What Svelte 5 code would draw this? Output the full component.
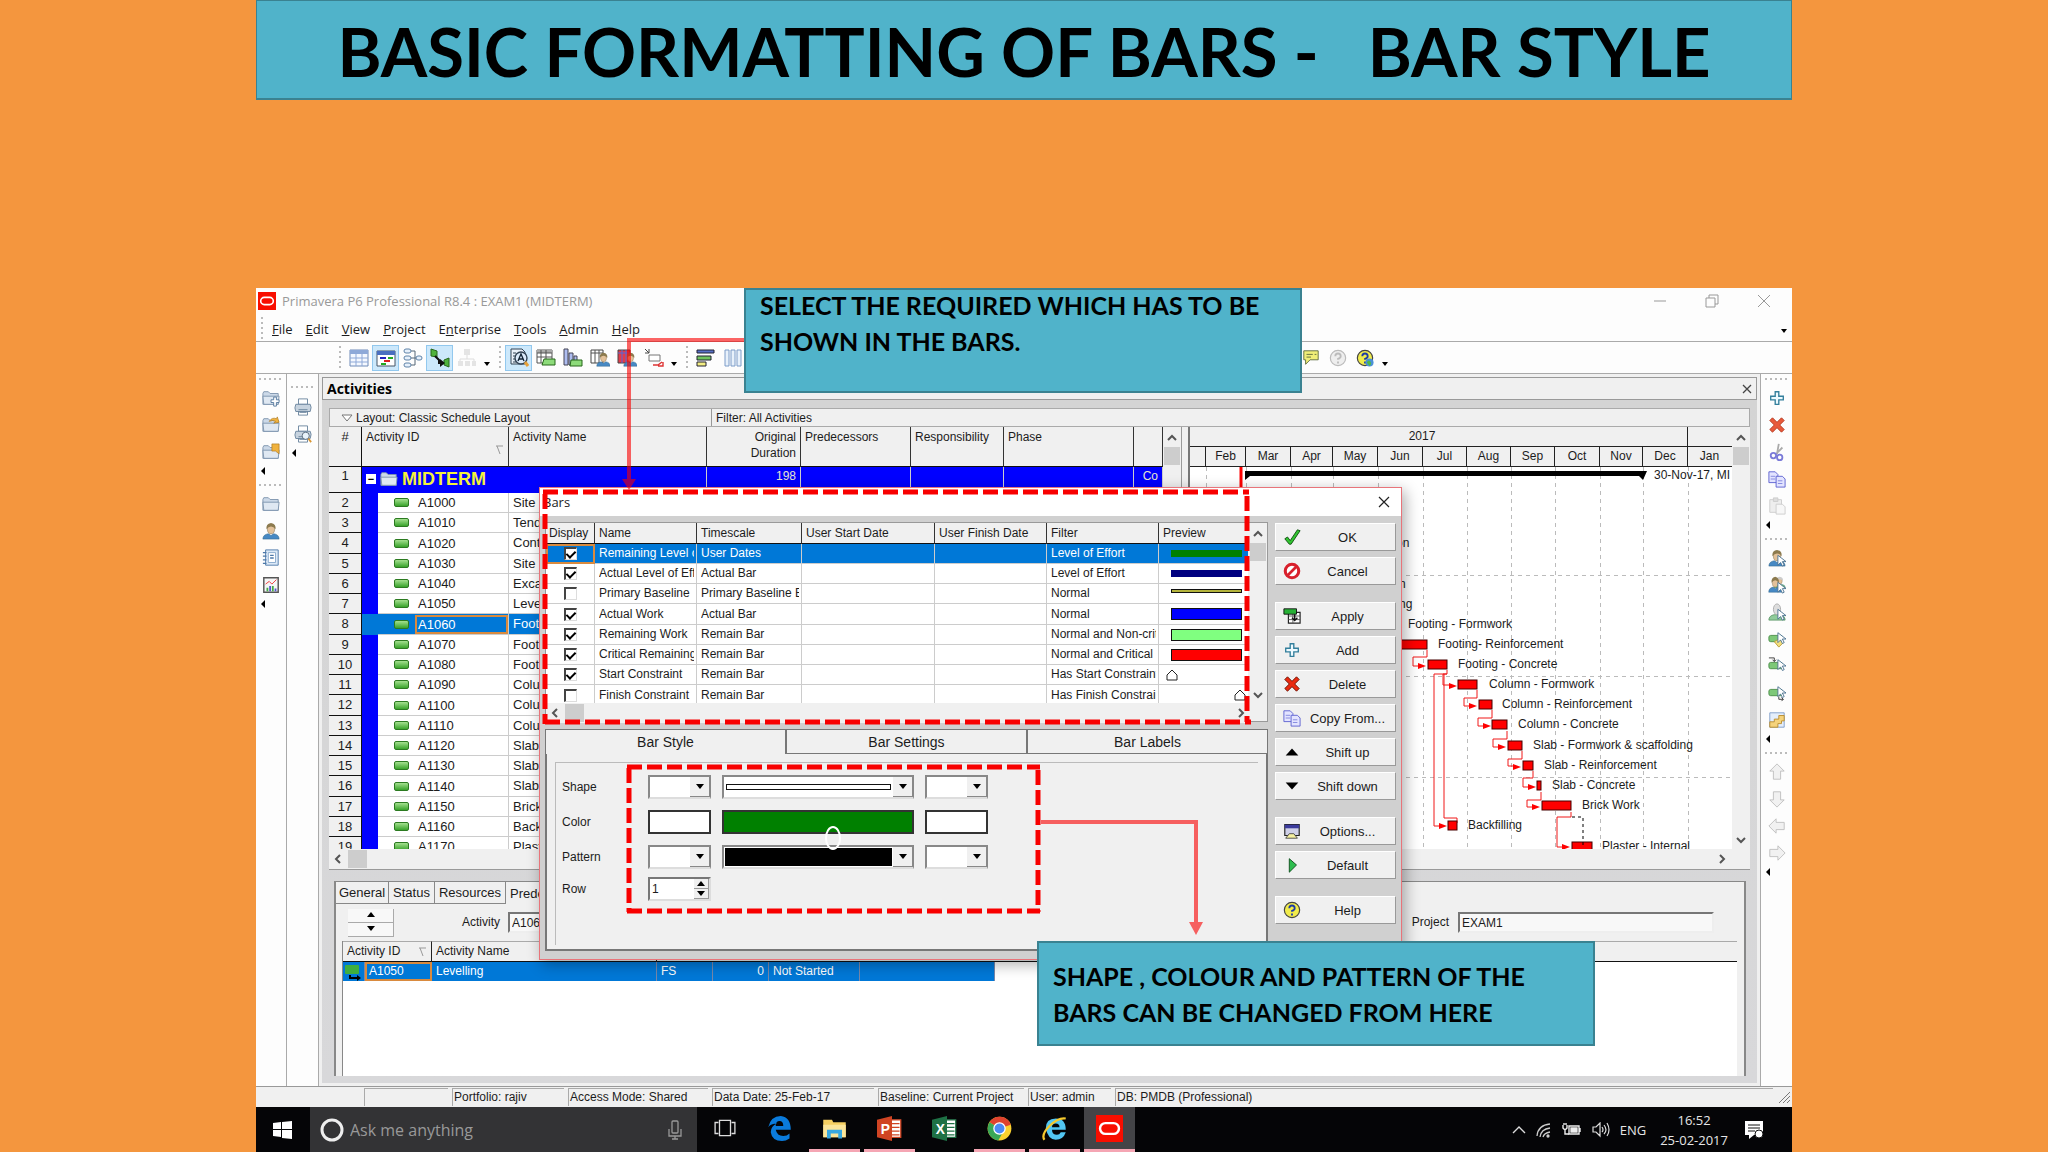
<script>
    const menus = [
        ['F', 'ile'], ['E', 'dit'], ['V', 'iew'], ['P', 'roject'],
        ['E', 'nterprise', 1], ['T', 'ools'], ['A', 'dmin'], ['H', 'elp']
    ];
    const leftTools = ['dots', 'folderAdd', 'folderOpen', 'folderWin', 'tri', 'dots', 'folder', 'person', 'notebook', 'report', 'tri'];
    const rightTools = [
        'dots', 'plus', 'cross', 'cut', 'copy', 'paste', 'tri', 'dots', 'assign', 'assignTwo', 'assignRole',
        'actCode', 'pred', 'succ', 'steps', 'tri', 'dots', 'up', 'down', 'left', 'right', 'tri'
    ];
    const activities = [
        ['A1000', 'Site '], ['A1010', 'Tendering'], ['A1020', 'Contract'], ['A1030', 'Site '], ['A1040', 'Excavation'],
        ['A1050', 'Levelling'], ['A1060', 'Footing - Formwork'], ['A1070', 'Footing- Reinforcement'],
        ['A1080', 'Footing - Concrete'], ['A1090', 'Column - Formwork'], ['A1100', 'Column - Reinforcement'],
        ['A1110', 'Column - Concrete'], ['A1120', 'Slab - Formwork'], ['A1130', 'Slab - Reinforcement'],
        ['A1140', 'Slab - Concrete'], ['A1150', 'Brick Work'], ['A1160', 'Backfilling'], ['A1170', 'Plaster - Internal']
    ];
    const months = [
        ['', 16], ['Feb', 40], ['Mar', 45], ['Apr', 42], ['May', 45], ['Jun', 45], ['Jul', 44],
        ['Aug', 44], ['Sep', 44], ['Oct', 45], ['Nov', 43], ['Dec', 45], ['Jan', 43]
    ];
    const gridX = [16, 56, 101, 143, 188, 233, 277, 321, 365, 410, 453, 498];
    // x, width, label x, label, middle y
    const bars = [
        [180, 57, 248, 'Footing- Reinforcement', 178],
        [238, 19, 268, 'Footing - Concrete', 198],
        [268, 19, 299, 'Column - Formwork', 218],
        [289, 13, 312, 'Column - Reinforcement', 238],
        [302, 15, 328, 'Column - Concrete', 258],
        [318, 14, 343, 'Slab - Formwork & scaffolding', 279],
        [333, 10, 354, 'Slab - Reinforcement', 299],
        [347, 4, 362, 'Slab - Concrete', 319],
        [352, 29, 392, 'Brick Work', 339],
        [258, 9, 278, 'Backfilling', 359],
        [382, 20, 412, 'Plaster - Internal', 380]
    ];
    const links = [
        'M237 183v7h-14v9h7', 'M257 203v4h-4v11h8', 'M287 223v8h-13v8h7', 'M302 243v8h-14v8h7', 'M317 264v8h-14v8h7',
        'M332 284v8h-14v7h7', 'M343 304v7h-10v9h7', 'M351 325v8h-14v7h7', 'M257 207h-13v152h7', 'M254 207v144h13v5', 'M381 345v5h-14v30h7'
    ];
    const heads = [[230, 199], [261, 219], [281, 239], [295, 259], [310, 280], [325, 300], [340, 320], [344, 340], [251, 359], [374, 380]];
    let styles = $state([
        { on: true, name: 'Remaining Level of Effort', scale: 'User Dates', filter: 'Level of Effort', kind: 'green' },
        { on: true, name: 'Actual Level of Effort', scale: 'Actual Bar', filter: 'Level of Effort', kind: 'navy' },
        { on: false, name: 'Primary Baseline', scale: 'Primary Baseline Bar', filter: 'Normal', kind: 'olive' },
        { on: true, name: 'Actual Work', scale: 'Actual Bar', filter: 'Normal', kind: 'blue' },
        { on: true, name: 'Remaining Work', scale: 'Remain Bar', filter: 'Normal and Non-critical', kind: 'lime' },
        { on: true, name: 'Critical Remaining Work', scale: 'Remain Bar', filter: 'Normal and Critical', kind: 'red' },
        { on: true, name: 'Start Constraint', scale: 'Remain Bar', filter: 'Has Start Constraint', kind: 'start' },
        { on: false, name: 'Finish Constraint', scale: 'Remain Bar', filter: 'Has Finish Constraint', kind: 'finish' }
    ]);
    const actions = [
        [['ok', 'OK'], ['cancel', 'Cancel']],
        [['apply', 'Apply'], ['plus', 'Add'], ['delete', 'Delete'], ['copy', 'Copy From...'], ['shiftUp', 'Shift up'], ['shiftDown', 'Shift down']],
        [['options', 'Options...'], ['play', 'Default']],
        [['help', 'Help']]
    ];
    const status = [
        ['', 84], ['Portfolio: rajiv', 112], ['Access Mode: Shared', 140], ['Data Date: 25-Feb-17', 162],
        ['Baseline: Current Project', 146], ['User: admin', 83]
    ];
    const apps = ['taskview', 'edge', 'explorer', 'powerpoint', 'excel', 'chrome', 'ie', 'oracle'];
    const running = ['explorer', 'powerpoint', 'chrome', 'ie', 'oracle'];
    let row = $state('1');
</script>

{#snippet pointer()}
    <path d="M11 7v11l3-3 2 4 2-1-2-4h4z" fill="#fff" stroke="#49718f" />
{/snippet}

{#snippet man(hair, body)}
    <path d="M1 19q0-5 6-6l3 2 3-2q6 1 6 6z" fill={body} stroke="#33668a" stroke-width=".6" />
    <ellipse cx="10" cy="8" rx="4" ry="5" fill="#e3c199" stroke="#8a7350" stroke-width=".6" />
    <path d="M5 8q-1-6 5-7q6 1 5 7q-2-3-5-3t-5 3" fill={hair} />
{/snippet}

{#snippet icon(name, size = 20)}
    <svg class="icon" width={size} height={size} viewBox="0 0 20 20" fill="none" aria-hidden="true">
        {#if name === 'oracle'}
            <path fill="#f80e00" d="M0 0h20v20H0z" /><rect x="3" y="6" width="14" height="8" rx="4" stroke="#fff" stroke-width="1.8" />
        {:else if name === 'table'}
            <path d="M1 2h18v16H1z" fill="#f4f8ff" stroke="#6f8bb8" /><path d="M1 2h18v4H1z" fill="#8ea9d8" /><path d="M1 10h18M1 14h18M7 2v16M13 2v16" stroke="#8ea9d8" />
        {:else if name === 'gantt'}
            <path d="M1 3h18v15H1z" fill="#fff" stroke="#456" /><path d="M1 3h18v4H1z" fill="#4a6fc0" /><path d="M4 10h6" stroke="#22b" stroke-width="2" /><path d="M8 13h6" stroke="#d22" stroke-width="2" /><path d="M12 10h5M5 16h5" stroke="#2a2" stroke-width="2" />
        {:else if name === 'network'}
            <path d="M8 3h4v14H8M6 10h8" stroke="#567" /><g fill="#e6f0fb" stroke="#5f83a8"><rect x="1" y="1" width="7" height="4" rx="2" /><rect x="1" y="8" width="7" height="4" rx="2" /><rect x="1" y="15" width="7" height="4" rx="2" /><rect x="13" y="8" width="6" height="4" rx="2" /></g>
        {:else if name === 'trace'}
            <path d="M1 1l6 2v6L1 8zM14 12l5-2v9l-5-2z" fill="#4fb23c" stroke="#27661b" /><path d="M5 8l4 4v3h3" stroke="#111" stroke-width="2" /><path d="M10 11l5 4-5 4z" fill="#111" />
        {:else if name === 'orgchart'}
            <path d="M10 6v5M3 13v-2h14v2" stroke="#ddd" /><path d="M7 1h6v6H7zM1 13h5v5H1zM8 13h5v5H8zM15 13h4v5h-4z" fill="#e4e4e4" />
        {:else if name === 'find'}
            <path d="M2 1h11l3 3v12H2z" fill="#eaf1fa" stroke="#345" /><path d="M4 5h3M4 8h3M4 11h3M4 14h3" stroke="#345" /><circle cx="12" cy="10" r="6" fill="#dcebfb" stroke="#345" stroke-width="1.4" /><path d="M9 13l3-7 3 7M10 11h4" stroke="#123" stroke-width="1.3" /><path d="M16 14l3 4" stroke="#e5a03a" stroke-width="3" />
        {:else if name === 'sheetBar'}
            <path d="M1 2h15v13H1z" fill="#fff" stroke="#555" /><path d="M1 2h15v3H1z" fill="#aaa" /><path d="M1 5h15M5 2v13M1 9h15M10 2v9" stroke="#555" /><path d="M8 11h11v6H6z" fill="#8ddb7a" stroke="#27661b" />
        {:else if name === 'usage'}
            <path d="M1 1h4v16H1zM6 5h4v12H6zM11 8h3v9h-3z" fill="#aebdf0" stroke="#445" /><path d="M8 12h11v6H7z" fill="#8ddb7a" stroke="#27661b" />
        {:else if name === 'sheetMan' || name === 'barMan'}
            <path d="M1 2h12v13H1z" fill={name === 'barMan' ? '#e23c4a' : '#fff'} stroke="#444" /><path d="M5 2v13M9 2v13M1 5h12" stroke={name === 'barMan' ? '#5569d8' : '#555'} />
            <g transform="translate(6 4) scale(.75)">{@render man('#8c7a4e', '#4789c4')}</g>
        {:else if name === 'traceBox'}
            <path d="M5 7h11v6H5z" fill="#fff" stroke="#777" /><path d="M1 1l4 4M5 1v4H1" stroke="#444" /><path d="M9 17h5l4-3M14 18h5v-4" stroke="#d33" stroke-width="1.4" />
        {:else if name === 'barsThree'}
            <path d="M1 2h17v3H1z" fill="#5770c8" stroke="#223" /><path d="M1 8h14v4H1z" fill="#6fc35d" stroke="#223" /><path d="M1 14h9v4H1z" fill="#f4ee83" stroke="#223" />
        {:else if name === 'columns'}
            <path d="M2 2h4v16H2zM8 2h4v16H8zM14 2h4v16h-4z" fill="#e8f1fb" stroke="#7d9cc8" />
        {:else if name === 'talk'}
            <path d="M2 2h16v10h-9l-5 5v-5H2z" fill="#f0ee78" stroke="#5c6a3d" /><path d="M5 6h7M5 9h5M14 6h2" stroke="#5c6a3d" />
        {:else if name === 'helpOff' || name === 'help' || name === 'helpWeb'}
            <circle cx="10" cy="10" r="8.5" fill={name === 'helpOff' ? '#eee' : '#f1ec4c'} stroke={name === 'helpOff' ? '#bbb' : '#444'} stroke-width="1.3" />
            <path d="M7 8q0-3 3-3t3 3q0 2-3 3v1M10 14v2" stroke={name === 'helpOff' ? '#bbb' : '#1d3ba6'} stroke-width="2" />
            {#if name === 'helpWeb'}<circle cx="15" cy="15" r="4.5" fill="#4a90d8" /><path d="M12 15q2-4 4-1t-1 5" fill="#4db848" />{/if}
        {:else if name.startsWith('folder')}
            <path d="M1 5l1-2h5l2 2h9v12H1z" fill="#ccd9e8" stroke="#7c93ad" /><path d="M1 8h18l-1 9H2z" fill="#dfe8f2" stroke="#7c93ad" />
            {#if name === 'folderAdd'}<path d="M13 9h3v3h3v3h-3v4h-3v-4h-3v-3h3z" fill="#fff" stroke="#53779c" />{/if}
            {#if name === 'folderOpen'}<path d="M8 6q3-5 8-3l1-2 2 6-6 1 2-2q-3-2-7 0" fill="#f0b23e" stroke="#a97418" stroke-width=".7" />{/if}
            {#if name === 'folderWin'}<path d="M11 1h8v11l-4-3h-4z" fill="#f0b23e" stroke="#a97418" stroke-width=".7" />{/if}
        {:else if name === 'person'}
            {@render man('#8c7a4e', '#4789c4')}
        {:else if name === 'notebook'}
            <path d="M4 1h14v17H4z" fill="#dce9f7" stroke="#4c78a8" /><path d="M7 4h8v11H7z" fill="#fff" stroke="#86a8cc" /><path d="M9 7h4M9 10h4M1 4h4M1 8h4M1 12h4M1 16h4" stroke="#4c78a8" stroke-width="1.4" />
        {:else if name === 'report'}
            <path d="M2 2h16v16H2z" fill="#f6f6f6" stroke="#555" stroke-width="1.6" /><path d="M4 9l4-3 3 3 5-5" stroke="#e33" /><path d="M6 17v-4M12 17v-6" stroke="#4a4" stroke-width="2" /><path d="M9 17v-6M15 17v-3" stroke="#55c" stroke-width="2" />
        {:else if name.startsWith('print')}
            <path d="M5 1h10v6H5zM5 13h10v6H5z" fill="#fff" stroke="#68829c" /><path d="M2 7h16q2 3 0 8H2Q0 11 2 7z" fill="#c7d3df" stroke="#68829c" /><path d="M5 13h10M6 16h8" stroke="#68829c" />
            {#if name === 'printView'}<circle cx="13" cy="12" r="4" fill="#e9f3fb" stroke="#567" /><path d="M16 15l3 4" stroke="#d99632" stroke-width="2" />{/if}
        {:else if name === 'plus'}
            <path d="M8 3h4v5h5v4h-5v5H8v-5H3V8h5z" fill="#eefaff" stroke="#337f9c" stroke-width="1.5" />
        {:else if name === 'cross' || name === 'delete'}
            <path d="M5 2l5 5 5-5 3 3-5 5 5 5-3 3-5-5-5 5-3-3 5-5-5-5z" fill={name === 'delete' ? '#ea2a10' : '#e9593a'} stroke={name === 'delete' ? '#661000' : '#b23b22'} />
        {:else if name === 'cut'}
            <path d="M12 1l-2 11M16 5l-8 8" stroke="#aaa" stroke-width="2" /><circle cx="6" cy="14" r="3" stroke="#7a7ad8" stroke-width="2" /><circle cx="13" cy="16" r="3" stroke="#7a7ad8" stroke-width="2" />
        {:else if name === 'copy'}
            <path d="M1 2h7l3 3v9H1z" fill="#e3e4ff" stroke="#5a5fd0" /><path d="M9 7h7l3 3v9H9z" fill="#e3e4ff" stroke="#5a5fd0" /><path d="M3 7h5M3 10h5M11 12h5M11 15h5" stroke="#7f83dd" />
        {:else if name === 'paste'}
            <path d="M2 3h13v14H2z" fill="#eee" stroke="#ccc" /><path d="M6 1h5v4H6z" fill="#ddd" stroke="#ccc" /><path d="M9 8h7l3 3v8H9z" fill="#f7f7f7" stroke="#ccc" />
        {:else if name === 'assign'}
            {@render man('#8c7a4e', '#4789c4')}{@render pointer()}
        {:else if name === 'assignTwo'}
            <g transform="translate(6 0) scale(.7)">{@render man('#ccc', '#7bc47b')}</g><g transform="scale(.8 .95)">{@render man('#8c7a4e', '#4789c4')}</g>{@render pointer()}
        {:else if name === 'assignRole'}
            <path d="M1 19q0-5 6-6h6q6 1 6 6z" fill="#8fcb9a" stroke="#5d9a69" /><ellipse cx="10" cy="7" rx="4" ry="6" fill="#ddd" stroke="#aaa" />{@render pointer()}
        {:else if name === 'actCode' || name === 'pred' || name === 'succ'}
            <rect x="1" y="6" width="15" height="7" rx="2" fill="#7dc878" stroke="#4a8d48" />
            {#if name === 'actCode'}<path d="M7 13l5-3 5 4-5 5z" fill="#f4df7e" stroke="#b79a33" />{/if}
            {#if name === 'pred'}<path d="M1 1h6v4M5 3l2 2 2-2" stroke="#333" />{/if}
            {#if name === 'succ'}<path d="M12 14v3h5M15 15l2 2-2 2" stroke="#333" />{/if}
            <g transform="translate(0 -4)">{@render pointer()}</g>
        {:else if name === 'steps'}
            <path d="M2 2h16v16H2z" fill="#e4eefb" stroke="#7d9cc8" /><path d="M2 18v-6h5V9h5V5h6v6h-3v3h-4v4z" fill="#f5d37c" stroke="#b98b2b" />
        {:else if ['up', 'down', 'left', 'right'].includes(name)}
            <path transform="rotate({{ up: 0, right: 90, down: 180, left: 270 }[name]} 10 10)" d="M10 1l8 8h-4v9H6V9H2z" fill="#f1f1f1" stroke="#bdbdbd" />
        {:else if name === 'ok'}
            <path d="M2 12l3-2 3 4 8-12 3 1L9 18H7z" fill="#31c531" stroke="#114d11" />
        {:else if name === 'cancel'}
            <circle cx="10" cy="10" r="7.5" fill="#fff" stroke="#d8202c" stroke-width="3.4" /><path d="M5 15L15 5" stroke="#d8202c" stroke-width="3" />
        {:else if name === 'apply'}
            <path d="M6 6h13v12H6z" fill="#fff" stroke="#222" stroke-width="1.3" /><path d="M6 10h13M6 14h13M11 6v12" stroke="#555" /><path d="M1 2h14v6H1z" fill="#27b236" stroke="#111" /><path d="M13 8v7M10 12l3 3 3-3" stroke="#111" stroke-width="1.5" />
        {:else if name === 'shiftUp'}
            <path d="M10 6l7 8H3z" fill="#000" />
        {:else if name === 'shiftDown'}
            <path d="M10 14l7-8H3z" fill="#000" />
        {:else if name === 'options'}
            <path d="M2 3h16v12H2z" fill="#cfd0e8" stroke="#222" stroke-width="1.3" /><path d="M2 3h16v4H2z" fill="#3b3b9c" /><path d="M3 18l4-5h5l4 5z" fill="#f5f0a0" stroke="#444" />
        {:else if name === 'play'}
            <path d="M7 3l8 7-8 8z" fill="#2dbd4e" stroke="#0c4c1b" />
        {:else if name === 'taskview'}
            <path d="M5 3h10v14H5zM4 5H1v10h3M16 5h3v10h-3" stroke="#ddd" stroke-width="1.2" />
        {:else if name === 'edge'}
            <path d="M1 9Q3 0 11 0q8 1 8 11H7q1 5 6 5 3 0 5-2v4q-3 2-6 2-8 0-9-7 0-5 5-7-5 0-7 3zm6-1h6q0-4-3-4t-3 4z" fill="#0a7bdc" fill-rule="evenodd" />
        {:else if name === 'explorer'}
            <path d="M1 3h7l1 2h10v12H1z" fill="#f5cf62" /><path d="M1 7h18v10H1z" fill="#fbe59a" /><path d="M4 18v-7h12v7h-3v-4H7v4z" fill="#38a8e0" />
        {:else if name === 'powerpoint' || name === 'excel'}
            <path d="M10 3h9v14h-9z" fill="#fff" stroke={name === 'excel' ? '#1e7145' : '#d04423'} /><path d="M12 6h6M12 9h6M12 12h6M12 15h6" stroke={name === 'excel' ? '#1e7145' : '#d04423'} />
            <path d="M0 3l12-3v20L0 17z" fill={name === 'excel' ? '#1e7145' : '#d04423'} />
            <text x="3" y="14" class="logo">{name === 'excel' ? 'X' : 'P'}</text>
        {:else if name === 'chrome'}
            <circle cx="10" cy="10" r="9.5" fill="#fbd22f" /><path d="M10 10L2 5a9.500 9.500 0 0 1 17 2z" fill="#e0432f" /><path d="M10 10L2 5a9.500 9.500 0 0 0 7 14.500l4-7z" fill="#3aa757" /><circle cx="10" cy="10" r="4.500" fill="#4c8bf5" stroke="#fff" />
        {:else if name === 'ie'}
            <path d="M3 10q0-8 8-8t8 9H8q0 4 4 4 2 0 3-2h4q-2 6-8 6t-8-9zm5-1h6q0-3-3-3T8 9z" fill="#52c6f2" fill-rule="evenodd" /><path d="M2 19Q-1 15 6 8T19 2" stroke="#f5c92e" stroke-width="1.8" />
        {/if}
    </svg>
{/snippet}

{#snippet tool(name)}
    {#if name === 'dots'}
        <span class="dots"></span>
    {:else if name === 'tri'}
        <svg class="tri" width="8" height="10" aria-hidden="true"><path d="M6 1v8L2 5z" /></svg>
    {:else}
        <button class="tool" aria-label={name}>{@render icon(name, 18)}</button>
    {/if}
{/snippet}

{#snippet chevron(dir)}
    <svg width="12" height="12" viewBox="0 0 12 12" fill="none" stroke="#555" stroke-width="2" aria-hidden="true">
        <path transform="rotate({{ up: 0, right: 90, down: 180, left: 270 }[dir]} 6 6)" d="M2 8l4-4 4 4" />
    </svg>
{/snippet}

{#snippet combo(label, kind)}
    <div class="combo {kind}">
        <select aria-label={label}><option></option></select>
        <span class="sample"></span>
        <span class="arrow"><svg width="10" height="6"><path d="M1 0h8L5 5z" /></svg></span>
    </div>
{/snippet}

<main class="slide">
    <h1>BASIC FORMATTING OF BARS - &nbsp; BAR STYLE</h1>

    <section class="screen">
        <header class="titlebar">
            {@render icon('oracle', 18)}
            <span class="apptitle">Primavera P6 Professional R8.4 : EXAM1 (MIDTERM)</span>
            <div class="winbtns">
                <button aria-label="Minimize"><svg width="14" height="14"><path d="M1 7h12" /></svg></button>
                <button aria-label="Restore"><svg width="14" height="14"><path d="M1 4h9v9H1zM4 4V1h9v9h-3" /></svg></button>
                <button aria-label="Close"><svg width="14" height="14"><path d="M1 1l12 12M13 1L1 13" /></svg></button>
            </div>
        </header>
        <nav class="menubar">
            <span class="vdots"></span>
            {#each menus as [a, b, n]}
                <a href="#menu">{#if n}E<u>n</u>terprise{:else}<u>{a}</u>{b}{/if}</a>
            {/each}
            <svg class="more" width="8" height="10"><path d="M1 5h6L4 9z" /></svg>
        </nav>
        <div class="toolbar">
            <span class="vdots"></span>
            <button aria-label="Table">{@render icon('table')}</button>
            <button class="on" aria-label="Gantt chart">{@render icon('gantt')}</button>
            <button aria-label="Network">{@render icon('network')}</button>
            <button class="on" aria-label="Trace">{@render icon('trace')}</button>
            <button aria-label="Chart">{@render icon('orgchart')}</button>
            <svg class="drop" width="10" height="6"><path d="M2 1h6L5 5z" /></svg>
            <span class="vdots"></span>
            <button class="on" aria-label="Details">{@render icon('find')}</button>
            <button aria-label="Activity table">{@render icon('sheetBar')}</button>
            <button aria-label="Usage">{@render icon('usage')}</button>
            <button aria-label="Resources">{@render icon('sheetMan')}</button>
            <button aria-label="Profile">{@render icon('barMan')}</button>
            <button aria-label="Logic">{@render icon('traceBox')}</button>
            <svg class="drop" width="10" height="6"><path d="M2 1h6L5 5z" /></svg>
            <span class="vdots"></span>
            <button aria-label="Bars">{@render icon('barsThree')}</button>
            <button aria-label="Columns">{@render icon('columns')}</button>
            <div class="helpers">
                <button aria-label="Comment">{@render icon('talk', 18)}</button>
                <button aria-label="Help">{@render icon('helpOff', 18)}</button>
                <button aria-label="Online help">{@render icon('helpWeb', 18)}</button>
                <svg class="drop" width="10" height="6"><path d="M2 1h6L5 5z" /></svg>
            </div>
        </div>

        <div class="workspace">
            <div class="side first">{#each leftTools as t}{@render tool(t)}{/each}</div>
            <div class="side second">{#each ['dots', 'print', 'printView', 'tri'] as t}{@render tool(t)}{/each}</div>
            <div class="center">
                <div class="heading">
                    <h2>Activities</h2>
                    <button aria-label="Close activities"><svg width="10" height="10"><path d="M1 1l8 8M9 1L1 9" stroke="#444" stroke-width="1.3" /></svg></button>
                </div>
                <div class="panel">
                    <div class="layoutbar">
                        <div class="layoutname">
                            <svg width="12" height="8"><path d="M1 1h10L6 7z" fill="#fff" stroke="#777" /></svg>
                            Layout: Classic Schedule Layout
                        </div>
                        <div>Filter: All Activities</div>
                    </div>
                    <div class="split">
                        <div class="pane sheet">
                            <div class="view">
                                <table class="acts">
                                    <colgroup>
                                        <col class="w33" /><col class="w16" /><col class="w131" /><col class="w198" /><col class="w94" />
                                        <col class="w110" /><col class="w93" /><col class="w130" /><col class="w29" />
                                    </colgroup>
                                    <thead>
                                        <tr>
                                            <th class="mid">#</th><th colspan="2"><span class="sorted">Activity ID<svg width="8" height="10"><path d="M0 1h7M1 1l3 8" fill="none" stroke="#999" /></svg></span></th>
                                            <th>Activity Name</th><th class="num">Original Duration</th>
                                            <th>Predecessors</th><th>Responsibility</th><th>Phase</th><th></th>
                                        </tr>
                                    </thead>
                                    <tbody>
                                        <tr class="wbs">
                                            <td class="mid">1</td>
                                            <td colspan="3"><span class="wbsname"><span class="minus">−</span>{@render icon('folder', 18)}MIDTERM</span></td>
                                            <td class="num">198</td><td></td><td></td><td></td><td class="num">Co</td>
                                        </tr>
                                        {#each activities as [id, name], i}
                                            <tr class:picked={id === 'A1060'}>
                                                <td class="mid">{i + 2}</td>
                                                <td class="stripe"></td>
                                                <td class="idcell"><span class="act"><i class="pill"></i><span class="actid">{id}</span></span></td>
                                                <td class="big">{name}</td><td></td><td></td><td></td><td></td><td></td>
                                            </tr>
                                        {/each}
                                    </tbody>
                                </table>
                                <div class="vscroll">{@render chevron('up')}<span class="vthumb"></span></div>
                            </div>
                            <div class="hscroll">{@render chevron('left')}<span class="hthumb"></span></div>
                        </div>
                        <div class="pane gantt">
                            <div class="view">
                                <div class="chart">
                                    <div class="years"><span class="y17">2017</span><span></span></div>
                                    <div class="months">
                                        {#each months as [m, w]}<span style="width:{w}px">{m}</span>{/each}
                                    </div>
                                    <svg class="plot" width="100%" height="382">
                                        <g class="grid">
                                            {#each gridX as x}<path d="M{x} 0v382" />{/each}
                                            {#each [108, 209, 310] as y}<path d="M0 {y}h2000" />{/each}
                                        </g>
                                        <path d="M51 0v30" stroke="#f00" stroke-width="3" />
                                        <path d="M55 4h402l-4 9-4-4H60l-5 4z" />
                                        <text x="464" y="12">30-Nov-17, MI</text>
                                        <text x="132" y="80">Site Mobilisation</text>
                                        <text x="157" y="121">Excavation</text>
                                        <text x="175" y="141">Levelling</text>
                                        <text x="218" y="161">Footing - Formwork</text>
                                        {#each links as d}<path class="link" {d} />{/each}
                                        {#each heads as [x, y]}<path d="M{x - 2} {y - 3}l8 3-8 3z" fill="#f00" />{/each}
                                        {#each bars as [x, w, lx, label, y]}
                                            <rect class="bar" {x} y={y - 5} width={w} height="9" />
                                            <text x={lx} y={y + 3}>{label}</text>
                                        {/each}
                                        <path d="M382 350h11v30" fill="none" stroke="#000" stroke-dasharray="3 3" />
                                    </svg>
                                </div>
                                <div class="vscroll">{@render chevron('up')}<span class="vthumb"></span><span class="end">{@render chevron('down')}</span></div>
                            </div>
                            <div class="hscroll"><span class="end">{@render chevron('right')}</span></div>
                        </div>
                    </div>
                    <div class="details">
                        <div class="tabs">
                            <button class="w54">General</button><button class="w46">Status</button><button class="w71">Resources</button><button class="open">Predecessors</button>
                        </div>
                        <div class="fields">
                            <div class="updown">
                                <button aria-label="Previous"><svg width="10" height="6"><path d="M5 0l4 5H1z" /></svg></button>
                                <button aria-label="Next"><svg width="10" height="6"><path d="M1 0h8L5 5z" /></svg></button>
                            </div>
                            <label for="activity">Activity</label><input id="activity" class="actinput" value="A1060" />
                            <label for="project" class="proj">Project</label><input id="project" class="projinput" value="EXAM1" />
                        </div>
                        <div class="preds">
                            <table>
                                <colgroup>
                                    <col class="w22" /><col class="w67" /><col class="w225" /><col class="w56" /><col class="w56" /><col class="w91" /><col class="w135" /><col />
                                </colgroup>
                                <thead>
                                    <tr><th colspan="2"><span class="sorted">Activity ID<svg width="8" height="10"><path d="M0 1h7M1 1l3 8" fill="none" stroke="#999" /></svg></span></th><th>Activity Name</th><th colspan="5" class="last"></th></tr>
                                </thead>
                                <tbody>
                                    <tr>
                                        <td class="linkcell"><svg width="20" height="18"><rect x="1" y="2" width="14" height="9" rx="1" fill="#3fae3f" /><path d="M6 12v3h8" fill="none" stroke="#000" stroke-width="2" /><path d="M13 12l4 3-4 3z" /></svg></td>
                                        <td class="focus">A1050</td><td>Levelling</td><td>FS</td><td class="num">0</td><td>Not Started</td><td></td><td class="blank"></td>
                                    </tr>
                                </tbody>
                            </table>
                        </div>
                    </div>
                </div>
            </div>
            <div class="side third">{#each rightTools as t}{@render tool(t)}{/each}</div>
        </div>

        <footer class="statusbar">
            {#each status as [text, w]}<span style="width:{w}px">{text}</span>{/each}
            <span class="db">DB: PMDB (Professional)</span>
            <svg width="14" height="14"><path d="M2 13L13 2M6 13l7-7M10 13l3-3" stroke="#777" /></svg>
        </footer>

        <div class="taskbar">
            <button class="start" aria-label="Start"><svg width="20" height="20"><path d="M0 3l8-1v7H0zM9 2l10-1v8H9zM0 10h8v7l-8-1zM9 10h10v9L9 18z" fill="#fff" /></svg></button>
            <div class="search">
                <svg width="24" height="24"><circle cx="12" cy="12" r="10" fill="none" stroke="#eee" stroke-width="3" /></svg>
                <input placeholder="Ask me anything" aria-label="Ask me anything" />
                <svg width="14" height="20" fill="none" stroke="#999" stroke-width="1.3"><rect x="4" y="1" width="6" height="12" rx="1" /><path d="M1 9v7h12V9M7 16v3M4 19h6" /></svg>
            </div>
            {#each apps as a}
                <button class="app" class:running={running.includes(a)} class:current={a === 'oracle'} aria-label={a}>{@render icon(a, a === 'taskview' ? 22 : a === 'oracle' ? 27 : 25)}</button>
            {/each}
            <div class="tray">
                <svg width="14" height="9"><path d="M1 8l6-6 6 6" fill="none" stroke="#ddd" stroke-width="1.4" /></svg>
                <svg width="16" height="16" fill="none" stroke="#ccc" stroke-width="1.3"><path d="M1 14Q2 3 14 2M4 15Q5 7 14 6M7 15Q8 11 14 10" /><circle cx="12" cy="14" r="1" fill="#fff" /></svg>
                <svg width="20" height="14" fill="none" stroke="#eee" stroke-width="1.4"><path d="M1 2v3q2 3 4 0V2M3 6v5h4M2 0v2M4 0v2" /><path d="M7 3h10v8H7zM18 5v4" /><path d="M9 5h6v4H9z" fill="#eee" /></svg>
                <svg width="18" height="16" fill="none" stroke="#ddd" stroke-width="1.2"><path d="M1 5h3l4-4v13l-4-4H1zM10 5q2 3 0 5M12 3q4 5 0 9M15 1q4 7 0 13" /></svg>
                <span>ENG</span>
                <div class="clock"><span>16:52</span><span>25-02-2017</span></div>
                <svg width="20" height="20"><path d="M1 1h18v14h-9l-5 4v-4H1z" fill="#fff" /><path d="M4 5h12M4 8h12M4 11h7" stroke="#111" /><circle cx="15" cy="14" r="4" fill="#fff" stroke="#111" /></svg>
            </div>
        </div>

        <div class="dialog" role="dialog" aria-label="Bars">
            <div class="dlgtitle">Bars<button aria-label="Close dialog"><svg width="12" height="12"><path d="M1 1l10 10M11 1L1 11" stroke="#222" stroke-width="1.2" /></svg></button></div>
            <div class="dlgbody">
                <div class="dlgmain">
                    <div class="list">
                        <div class="listview">
                            <div class="listclip">
                                <table>
                                    <colgroup><col class="w49" /><col class="w102" /><col class="w105" /><col class="w133" /><col class="w112" /><col class="w112" /><col /></colgroup>
                                    <thead>
                                        <tr><th>Display</th><th>Name</th><th>Timescale</th><th>User Start Date</th><th>User Finish Date</th><th>Filter</th><th class="last">Preview</th></tr>
                                    </thead>
                                    <tbody>
                                        {#each styles as s, i}
                                            <tr class:picked={i === 0}>
                                                <td class="check" class:focus={i === 0}><input type="checkbox" bind:checked={s.on} aria-label={s.name} /></td>
                                                <td><div class="clip">{s.name}</div></td><td><div class="clip">{s.scale}</div></td><td></td><td></td><td><div class="clip">{s.filter}</div></td>
                                                <td class="preview">
                                                    {#if s.kind === 'start' || s.kind === 'finish'}
                                                        <svg class="house {s.kind}" width="12" height="12"><path d="M1 11V6l5-5 5 5v5z" fill="#fff" stroke="#222" /></svg>
                                                    {:else}
                                                        <div class="swatch {s.kind}"></div>
                                                    {/if}
                                                </td>
                                            </tr>
                                        {/each}
                                    </tbody>
                                </table>
                            </div>
                            <div class="hscroll">{@render chevron('left')}<span class="hthumb"></span><span class="end">{@render chevron('right')}</span></div>
                        </div>
                        <div class="vscroll">{@render chevron('up')}<span class="vthumb"></span><span class="end low">{@render chevron('down')}</span></div>
                    </div>
                    <div class="styletabs"><button class="open">Bar Style</button><button>Bar Settings</button><button>Bar Labels</button></div>
                    <div class="tabpage">
                        <div class="form">
                            <span>Shape</span>{@render combo('Start shape', 'small')}{@render combo('Bar shape', 'outline')}{@render combo('End shape', 'small')}
                            <span>Color</span><button class="color" aria-label="Start color"></button><button class="color fill" aria-label="Bar color"></button><button class="color" aria-label="End color"></button>
                            <span>Pattern</span>{@render combo('Start pattern', 'small')}{@render combo('Bar pattern', 'solid')}{@render combo('End pattern', 'small')}
                            <label for="row">Row</label>
                            <div class="spinner">
                                <input id="row" bind:value={row} />
                                <button aria-label="More"><svg width="8" height="5"><path d="M4 0l4 5H0z" /></svg></button>
                                <button aria-label="Less"><svg width="8" height="5"><path d="M0 0h8L4 5z" /></svg></button>
                            </div>
                        </div>
                    </div>
                </div>
                <div class="actions">
                    {#each actions as group}
                        <div class="group">
                            {#each group as [ic, text]}<button>{@render icon(ic, 18)}<span>{text}</span></button>{/each}
                        </div>
                    {/each}
                </div>
            </div>
        </div>

        <svg class="marks" aria-hidden="true">
            <g class="dashed">
                <path d="M287 204h706" /><path d="M289 206v230" /><path d="M289 434h706" /><path d="M991 208v226" />
                <path d="M371 479h413" /><path d="M373 480v144" /><path d="M371 623h413" /><path d="M782 482v142" />
            </g>
            <g class="arrows">
                <path d="M488 52H373v144" /><path d="M785 534h155v106" />
                <path class="head" d="M366 191h14l-7 11z" /><path class="head" d="M933 634h14l-7 13z" />
            </g>
            <ellipse cx="577" cy="550" rx="7" ry="11" fill="none" stroke="#fff" stroke-width="2" />
        </svg>
        <p class="callout top"><span>SELECT THE REQUIRED WHICH HAS TO BE SHOWN IN THE BARS.</span></p>
        <p class="callout low"><span>SHAPE , COLOUR AND PATTERN OF THE BARS CAN BE CHANGED FROM HERE</span></p>
    </section>
</main>

<style>
    :global(body) { background: #f4963e; }
    * { box-sizing: border-box; }
    .slide {
        width: 75%;
        min-height: 100vh;
        margin: 0 auto;
        display: flex;
        flex-direction: column;
        font: 12px/15px "Liberation Sans", Arial, sans-serif;
        color: #1c1c1c;
    }
    h1 {
        margin: 0 0 188px;
        height: 100px;
        border: 1px solid #3a8291;
        border-bottom-width: 2px;
        background: #50b3ca;
        color: #000;
        font: bold 67px/100px Lato, sans-serif;
        text-align: center;
        white-space: nowrap;
    }
    button { font: inherit; color: inherit; border: 0; padding: 0; background: none; }
    input, select { font: inherit; color: inherit; margin: 0; }
    svg { display: block; flex: none; }
    .logo { font: bold 11px "Liberation Sans", sans-serif; fill: #fff; }
    .screen { position: relative; flex: 1; display: flex; flex-direction: column; background: #fdfdfd; }

    .titlebar { display: flex; align-items: center; height: 28px; padding: 0 21px 2px 2px; gap: 6px; font: 13px/18px "Open Sans", sans-serif; color: #999; }
    .winbtns { margin-left: auto; display: flex; gap: 38px; }
    .winbtns svg { fill: none; stroke: #999; }
    .menubar { display: flex; align-items: center; gap: 13px; height: 26px; padding: 0 4px 0 5px; border-bottom: 1px solid #aaa; font: 13px/18px "Open Sans", sans-serif; }
    .menubar a { color: inherit; text-decoration: none; }
    .menubar .vdots { margin-right: -4px; }
    .more { margin-left: auto; }
    .vdots { width: 2px; height: 24px; background: repeating-linear-gradient(#bbb 0 2px, transparent 2px 5px); }
    .dots { width: 24px; height: 2px; margin: 5px 0; background: repeating-linear-gradient(90deg, #bbb 0 2px, transparent 2px 5px); }
    .toolbar { display: flex; align-items: center; height: 32px; padding-left: 83px; border-bottom: 1px solid #aaa; }
    .toolbar button { width: 27px; height: 26px; display: grid; place-items: center; border: 1px solid transparent; }
    .toolbar .vdots + button { margin-left: 4px; }
    .toolbar .on { background: #cce8fb; border-color: #92c8ee; }
    .drop { margin: 12px 7px 0 2px; }
    .helpers { display: flex; align-items: center; margin: 0 0 0 auto; padding-right: 395px; }

    .workspace { flex: 1; display: flex; }
    .side { display: flex; flex-direction: column; align-items: center; width: 31px; border-right: 1px solid #aaa; }
    .second { width: 32px; padding-top: 7px; }
    .third { width: 31px; border: 0; }
    .tool { height: 27px; display: grid; place-items: center; }
    .first .dots, .third .dots { margin: 4px 0; }
    .tri { align-self: flex-start; margin: 1px 0 4px 3px; }

    .center { flex: 1; min-width: 0; display: flex; flex-direction: column; padding: 3px 3px 3px; background: #f0f0f0; border-right: 1px solid #aaa; }
    .heading { display: flex; align-items: center; justify-content: space-between; height: 23px; padding: 0 4px; border: 1px solid #999; background: #f0f0f0; }
    h2 { margin: 0; font: bold 14px/20px "Open Sans", sans-serif; color: #000; }
    .panel { flex: 1; display: flex; flex-direction: column; padding: 8px 7px 7px; background: linear-gradient(#d4d4d4, #d8d8da); }
    .layoutbar { display: flex; height: 19px; line-height: 18px; border: 1px solid #aaa; background: #f0f0f0; }
    .layoutbar div { padding-left: 4px; }
    .layoutbar .layoutname { display: flex; align-items: center; gap: 3px; width: 382px; padding-left: 11px; border-right: 1px solid #999; }
    .split { display: flex; border-bottom: 1px solid #999; background: #f0f0f0; }
    .pane { display: flex; flex-direction: column; }
    .sheet { border-right: 1px solid #999; }
    .gantt { flex: 1; min-width: 0; margin-left: 6px; border-left: 2px solid #777; }
    .view { display: flex; height: 422px; overflow: hidden; }
    table { table-layout: fixed; border-collapse: separate; border-spacing: 0; }
    th, td { padding: 0 4px; overflow: hidden; white-space: nowrap; text-align: left; font-weight: normal; vertical-align: middle; }
    .w16 { width: 16px; } .w22 { width: 22px; } .w29 { width: 29px; } .w33 { width: 33px; } .w49 { width: 49px; } .w56 { width: 56px; }
    .w67 { width: 67px; } .w91 { width: 91px; } .w93 { width: 93px; } .w94 { width: 94px; } .w102 { width: 102px; } .w105 { width: 105px; }
    .w110 { width: 110px; } .w112 { width: 112px; } .w130 { width: 130px; } .w131 { width: 131px; } .w133 { width: 133px; } .w135 { width: 135px; }
    .w198 { width: 198px; } .w225 { width: 225px; }
    .acts { width: 834px; align-self: flex-start; }
    .acts th { height: 40px; vertical-align: top; padding-top: 2px; border-right: 1px solid #333; border-bottom: 1px solid #111; background: #f0f0f0; white-space: normal; line-height: 16px; }
    .acts td { height: 20px; border-right: 1px solid #ccc; border-bottom: 1px solid #ccc; background: #fff; line-height: 18px; }
    .acts tr:nth-child(4n) td { height: 21px; }
    .acts .wbs td { height: 26px; background: #00f; color: #e6e6d0; border-bottom: 0; vertical-align: top; }
    .acts .mid, .acts .wbs .mid { text-align: center; background: #f0f0f0; color: #1c1c1c; border-right-color: #111; border-bottom: 1px solid #111; font-size: 13px; }
    .num, .acts .num { text-align: right; }
    .acts .stripe { background: #00f; border: 0; }
    .acts .big { font-size: 13px; }
    .wbsname { display: flex; align-items: center; height: 24px; gap: 4px; color: #f4f13a; font: bold 18px/24px "Liberation Sans", sans-serif; }
    .minus { width: 10px; height: 10px; background: #fff; color: #000; font: bold 11px/10px "Liberation Sans", sans-serif; text-align: center; }
    .acts .idcell { padding: 0; }
    .act { display: flex; align-items: center; padding-left: 16px; }
    .pill { width: 15px; height: 9px; border: 1px solid #2b7a20; border-radius: 2px; background: linear-gradient(#a4e08f, #39a32b); }
    .actid { flex: 1; margin-left: 6px; padding-left: 1px; font-size: 13px; border: 2px solid transparent; line-height: 15px; }
    .picked td { background: #0078d7; color: #fff; }
    .acts .picked td { background: #0078d7; color: #fff; }
    .acts .picked .mid { background: #f0f0f0; color: #1c1c1c; }
    .acts .picked .stripe { background: #0078d7; }
    .picked .actid { border-color: #d98a3e; }
    .sorted { display: flex; justify-content: space-between; align-items: center; }
    .acts .sorted { height: 26px; align-items: stretch; }
    .acts .sorted svg { align-self: flex-end; }

    .vscroll { width: 18px; display: flex; flex-direction: column; align-items: center; padding-top: 5px; background: #f0f0f0; }
    .vthumb { width: 16px; height: 18px; margin-top: 3px; background: #cdcdcd; }
    .hscroll { height: 20px; display: flex; align-items: center; padding-left: 3px; background: #f0f0f0; }
    .hthumb { width: 19px; height: 18px; margin-left: 4px; background: #cdcdcd; }
    .end { margin: auto 0 3px; }
    .hscroll .end { margin: 0 2px 0 auto; }
    .gantt .hscroll .end { margin-right: 22px; }
    .low { margin-bottom: 20px; }

    .chart { flex: 1; min-width: 0; overflow: hidden; background: #fff; }
    .years, .months { display: flex; height: 20px; background: #f0f0f0; border-bottom: 1px solid #222; text-align: center; line-height: 19px; }
    .years .y17 { width: 498px; padding-right: 33px; border-right: 1px solid #222; }
    .months span { flex: none; border-right: 1px solid #222; }
    .months span:last-child { border: 0; }
    .plot text { font: 12px "Liberation Sans", sans-serif; fill: #1c1c1c; }
    .grid { stroke: #bbb; stroke-dasharray: 4 4; shape-rendering: crispEdges; }
    .link { fill: none; stroke: #f01818; }
    .bar { fill: #f00; stroke: #400; }

    .details { flex: 1; display: flex; flex-direction: column; margin: 11px 4px 0 5px; border: 1px solid #888; border-width: 1px 2px 0 2px; background: #f0f0f0; }
    .tabs { display: flex; height: 22px; font-size: 13px; }
    .tabs button { border-right: 1px solid #888; border-bottom: 1px solid #888; }
    .tabs .open { width: 80px; padding-left: 4px; border-bottom: 0; text-align: left; overflow: hidden; }
    .w54 { width: 53px; } .w46 { width: 46px; } .w71 { width: 71px; }
    .fields { display: flex; align-items: center; height: 37px; padding: 0 30px 0 12px; }
    .updown { width: 46px; margin-right: 68px; }
    .updown button { width: 46px; height: 14px; display: grid; place-items: center; border: 1px solid #aaa; border-width: 0 1px 1px 0; background: #f8f8f8; }
    .fields input { height: 21px; padding: 0 2px; border: 2px solid; border-color: #777 #eee #eee #777; border-radius: 0; background: #f8f8f8; }
    .actinput { width: 250px; margin-left: 8px; }
    .proj { margin-left: auto; }
    .projinput { width: 256px; margin-left: 9px; }
    .preds { flex: 1; margin: 0 7px 0 6px; border-left: 1px solid #888; background: #fff; }
    .preds table { width: 100%; }
    .preds th { height: 21px; border-top: 1px solid #aaa; border-bottom: 1px solid #111; border-right: 1px solid #222; background: #f0f0f0; }
    .preds th.last { border-right: 0; }
    .preds td { height: 19px; border-right: 1px solid #78a; background: #0078d7; color: #fff; }
    .preds .blank { background: #fff; border: 0; }
    .preds .linkcell { padding: 0 1px; }
    .focus { outline: 2px solid #d98a3e; outline-offset: -2px; }

    .statusbar { display: flex; align-items: center; gap: 4px; height: 21px; padding: 0 1px 0 108px; background: #f0f0f0; border-top: 1px solid #999; }
    .statusbar span { height: 18px; padding-left: 1px; border: 1px solid #aaa; border-width: 1px 0 0 1px; line-height: 16px; white-space: nowrap; flex: none; }
    .statusbar .db { flex: 1; }

    .taskbar { display: flex; height: 45px; background: #050507; color: #e6e6e6; }
    .start { width: 54px; display: grid; place-items: center; }
    .search { width: 387px; margin-right: 2px; display: flex; align-items: center; padding: 0 15px 0 10px; gap: 6px; background: #333335; }
    .search input { flex: 1; min-width: 0; border: 0; padding: 0; background: none; font: 16px/22px "Open Sans", sans-serif; color: #999; }
    .search input::placeholder { color: #999; }
    .app { width: 51px; margin-right: 4px; display: grid; place-items: center; border-bottom: 3px solid transparent; }
    .app:nth-of-type(n + 2) { margin-right: 4px; }
    .running { border-color: #f5a6b4; }
    .current { background: #444447; }
    .tray { display: flex; align-items: center; margin-left: auto; padding-right: 28px; gap: 10px; font: 13px/20px "Open Sans", sans-serif; }
    .clock { display: flex; flex-direction: column; align-items: center; margin: 0 6px 0 4px; }

    .dialog { position: absolute; left: 283px; top: 199px; width: 863px; display: flex; flex-direction: column; border: 1px solid #e8747a; background: #d0d0d0; box-shadow: 3px 4px 14px #0005; }
    .dlgtitle { display: flex; align-items: center; justify-content: space-between; height: 28px; padding: 0 11px 0 3px; background: #fff; font: 13px/18px "Open Sans", sans-serif; }
    .dlgbody { display: flex; gap: 7px; padding: 6px 5px 8px 5px; }
    .dlgmain { flex: 1; min-width: 0; }
    .list { display: flex; height: 200px; margin-bottom: 7px; border: 1px solid #999; background: #f0f0f0; }
    .listview { flex: 1; min-width: 0; }
    .listclip { height: 180px; overflow: hidden; }
    .list table { width: 702px; background: #fff; }
    .list th { height: 21px; padding: 0 4px; border-right: 1px solid #333; border-bottom: 1px solid #111; background: #f0f0f0; }
    .list td { height: 20px; padding: 0 2px 0 4px; border-right: 1px solid #ccc; border-bottom: 1px solid #ccc; }
    .list .last { border-right: 0; }
    .list tr:nth-child(4n) td { height: 21px; }
    .list th:first-child { padding: 0 0 0 3px; }
    .clip { overflow: hidden; }
    .list .check { text-align: center; padding: 0; }
    .check input { appearance: none; display: block; width: 13px; height: 13px; margin: 0 auto; border: 1px solid; border-color: #444 #ddd #ddd #444; border-width: 2px 1px 1px 2px; background: #fff; }
    .check input:checked::before { content: ""; display: block; width: 4px; height: 7px; margin: 0 auto; border: solid #000; border-width: 0 2px 2px 0; transform: rotate(45deg); }
    .list .preview { padding: 0 6px 0 12px; border-right: 0; }
    .swatch { height: 12px; border: 1px solid #111; }
    .green, .navy { height: 7px; border: 0; background: #008000; }
    .navy { background: #000080; }
    .olive { height: 4px; margin-bottom: 6px; background: #b4b43c; }
    .blue { background: #00f; }
    .lime { background: #80ff80; }
    .red { background: #f00; }
    .house.start { width: 12px; margin-left: -5px; }
    .house.finish { margin-left: auto; margin-right: -4px; }

    .styletabs { display: flex; height: 25px; border: 1px solid #777; border-bottom: 0; background: #f0f0f0; font-size: 14px; }
    .styletabs button { flex: 1; padding-top: 1px; border-bottom: 1px solid #777; border-left: 2px solid #777; }
    .styletabs .open { border-bottom: 0; border-left: 0; }
    .tabpage { height: 197px; padding: 8px; border: 2px solid #777; border-top: 0; background: #f0f0f0; }
    .form { height: 183px; display: grid; grid-template: 24px 24px 24px 18px / 75px 63px 192px 63px; gap: 11px; align-items: center; align-content: start; padding: 12px 0 0 6px; border: 1px solid #bbb; border-width: 1px 0 0 1px; }
    .combo { display: grid; grid-template-columns: 1fr 20px; height: 24px; border: 2px solid #888; border-right-width: 1px; border-bottom-color: #ddd; background: #fff; }
    .combo select { grid-area: 1 / 1 / 2 / 3; appearance: none; width: 100%; height: 100%; border: 0; background: none; }
    .sample { grid-area: 1 / 1; margin: 1px; pointer-events: none; }
    .outline .sample { height: 6px; margin: 7px 2px; border: 1px solid #111; }
    .solid .sample { background: #000; }
    .arrow { grid-area: 1 / 2; display: grid; place-items: center; border: 1px solid #888; border-width: 0 1px 1px 0; background: #f0f0f0; pointer-events: none; }
    .color { height: 24px; border: 2px solid #333; background: #fff; }
    .fill { background: #008000; }
    .spinner { display: grid; grid-template-columns: 1fr 15px; grid-template-rows: 10px 10px; height: 24px; border: 2px solid; border-color: #777 #ddd #ddd #777; background: #fff; }
    .spinner input { grid-area: 1 / 1 / 3 / 2; width: 100%; border: 0; padding: 0 2px; background: none; }
    .spinner button { display: grid; place-items: center; border: 1px solid #999; border-width: 0 1px 1px 0; background: #f0f0f0; }

    .actions { width: 121px; display: flex; flex-direction: column; gap: 17px; padding-top: 1px; }
    .group { display: flex; flex-direction: column; gap: 6px; }
    .actions button { display: flex; align-items: center; height: 28px; padding-left: 7px; background: #f0f0f0; border: 1px solid; border-color: #fff #999 #999 #fff; font-size: 13px; }
    .actions button span { flex: 1; padding-right: 1px; text-align: center; white-space: nowrap; }

    .marks { position: absolute; inset: 0; width: 100%; height: 100%; pointer-events: none; }
    .dashed { fill: none; stroke: #f80000; stroke-width: 5px; stroke-dasharray: 15 5; }
    .arrows { fill: none; stroke: #fa0000; stroke-width: 4px; opacity: .6; }
    .head { fill: #fa0000; stroke: none; }
    .callout { position: absolute; display: flex; align-items: center; width: 558px; height: 105px; margin: 0; padding-left: 14px; border: 2px solid #3a8291; background: #50b3ca; color: #000; font: bold 25px/36px Lato, sans-serif; }
    .top { left: 488px; top: 0; }
    .top span { padding-bottom: 36px; }
    .callout.low { left: 781px; top: 653px; }
</style>
